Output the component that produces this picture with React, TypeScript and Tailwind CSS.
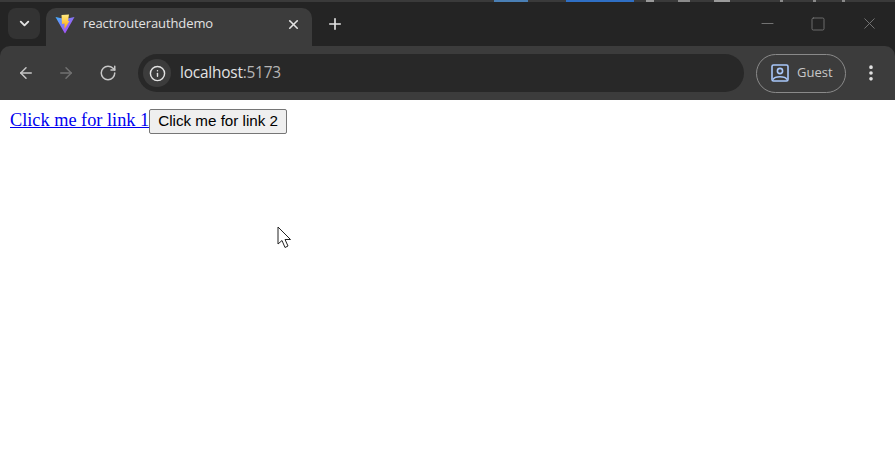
import { ArrowLeft, ArrowRight, ChevronDown, Info, Minus, MoreVertical, Plus, RotateCw, Square, X } from "lucide-react";

const ViteLogo = () => (
  <svg width="20" height="20" viewBox="0 0 20 20" className="shrink-0">
    <defs>
      <linearGradient id="viteBody" x1="0" y1="0" x2="1" y2="1">
        <stop offset="0" stopColor="#41b4ff" />
        <stop offset="0.55" stopColor="#8f6cf5" />
        <stop offset="1" stopColor="#bd34fe" />
      </linearGradient>
      <linearGradient id="viteBolt" x1="0" y1="0" x2="0" y2="1">
        <stop offset="0" stopColor="#ffea83" />
        <stop offset="1" stopColor="#ffa800" />
      </linearGradient>
    </defs>
    <path d="M0.5 3 L10 5 L19.5 3 L10.4 19 Q10 19.6 9.6 19 Z" fill="url(#viteBody)" />
    <path d="M6.5 1 L14 0.5 L13 7 L14.5 7 L9.5 15 L9.5 9.5 L7 10 Z" fill="url(#viteBolt)" />
  </svg>
);

const GuestIcon = () => (
  <svg width="18" height="18" viewBox="0 0 18 18" fill="none" stroke="#a8c7fa" strokeWidth="1.6">
    <rect x="1" y="1" width="16" height="16" rx="1.5" />
    <circle cx="9" cy="7" r="2.6" />
    <path d="M2 15.5 C4 11.8 14 11.8 16 15.5" />
  </svg>
);

const Cursor = () => (
  <svg width="15" height="23" viewBox="0 0 15 23" className="ml-[277px] mt-[92px]">
    <path
      d="M1 1 L1 18 L5 14.5 L8 21.5 L11 20 L8 13.5 L13.5 13.5 Z"
      fill="#fff"
      stroke="#222"
      strokeWidth="1"
      strokeLinejoin="round"
    />
  </svg>
);

export default function App() {
  return (
    <div className="w-[895px] h-[474px] overflow-hidden bg-white flex flex-col font-['Liberation_Sans',sans-serif]">
      <div className="h-[46px] bg-[#242424] flex items-end shrink-0 relative">
        {/* bit of the desktop showing above the window */}
        <div className="absolute top-0 left-0 right-0 h-[2px] bg-[#3a3a3a] flex">
          <span className="ml-[494px] w-[34px] bg-[#4a7fb5]" />
          <span className="ml-[38px] w-[68px] bg-[#2f6fc4]" />
          <span className="ml-[12px] w-[8px] bg-[#9a9a9a]" />
          <span className="ml-[24px] w-[12px] bg-[#8a8a8a]" />
          <span className="ml-[24px] w-[16px] bg-[#9a9a9a]" />
          <span className="ml-[50px] w-[3px] bg-[#8a8a8a]" />
          <span className="ml-[30px] w-[3px] bg-[#8a8a8a]" />
          <span className="ml-[26px] w-[3px] bg-[#8a8a8a]" />
        </div>
        <button className="w-[32px] h-[31px] ml-[8px] mb-[7px] rounded-lg bg-[#333333] flex items-center justify-center text-[#e3e3e3]">
          <ChevronDown size={15} strokeWidth={3} />
        </button>
        <div className="w-[266px] h-[38px] ml-[6px] rounded-t-[10px] bg-[#3c3c3c] flex items-center pb-[6px] pl-[9px] pr-[11px] text-[#e3e3e3]">
          <ViteLogo />
          <span className="ml-[8px] text-[13px] flex-1 font-['Open_Sans',sans-serif] tracking-[-0.1px]">reactrouterauthdemo</span>
          <X size={15} strokeWidth={2.6} />
        </div>
        <div className="ml-[14px] mb-[13px] text-[#e3e3e3]">
          <Plus size={18} strokeWidth={2.2} />
        </div>
        <div className="flex items-center ml-auto mb-[13px] text-[#777777]">
          <Minus size={19} strokeWidth={1.2} />
          <Square size={16} strokeWidth={1.3} className="ml-[33px]" />
          <X size={19} strokeWidth={1.2} className="ml-[34px] mr-[16px]" />
        </div>
      </div>

      <div className="h-[54px] bg-[#242424] shrink-0">
        <div className="h-full bg-[#3c3c3c] rounded-t-[10px] flex items-center">
          <ArrowLeft size={18} strokeWidth={2} className="ml-[17px] text-[#c7c7c7]" />
          <ArrowRight size={18} strokeWidth={2} className="ml-[22px] text-[#717171]" />
          <RotateCw size={18} strokeWidth={2} className="ml-[24px] text-[#c7c7c7]" />
          <div className="ml-[21px] w-[606px] h-[38px] rounded-full bg-[#282828] flex items-center pl-[5px]">
            <div className="w-[28px] h-[28px] rounded-full bg-[#3c3c3c] flex items-center justify-center text-[#e3e3e3]">
              <Info size={17} strokeWidth={2} />
            </div>
            <span className="ml-[9px] text-[15.4px] text-[#e3e3e3] font-['Open_Sans',sans-serif] tracking-[-0.2px]">
              localhost<span className="text-[#b5b5b5]">:5173</span>
            </span>
          </div>
          <div className="ml-[12px] w-[90px] h-[39px] rounded-full border border-[#8a8a8a] flex items-center pl-[14px] text-[#c7c7c7]">
            <GuestIcon />
            <span className="ml-[8px] text-[13px] font-['Open_Sans',sans-serif]">Guest</span>
          </div>
          <MoreVertical size={20} strokeWidth={2.4} className="ml-[15px] text-[#e3e3e3]" />
        </div>
      </div>

      <div className="flex-1">
        <div className="pl-[10px] pt-[9px] flex items-start h-[34px] font-['Liberation_Serif',serif] text-[18.3px] leading-[22px]">
          <a href="#" className="text-[#0000ee] underline">Click me for link 1</a>
          <button className="w-[138px] h-[25px] pb-[2px] bg-[#efefef] border border-[#767676] rounded-[2px] text-black text-[15.2px] font-['Liberation_Sans',sans-serif] leading-none">
            Click me for link 2
          </button>
        </div>
        <Cursor />
      </div>
    </div>
  );
}
